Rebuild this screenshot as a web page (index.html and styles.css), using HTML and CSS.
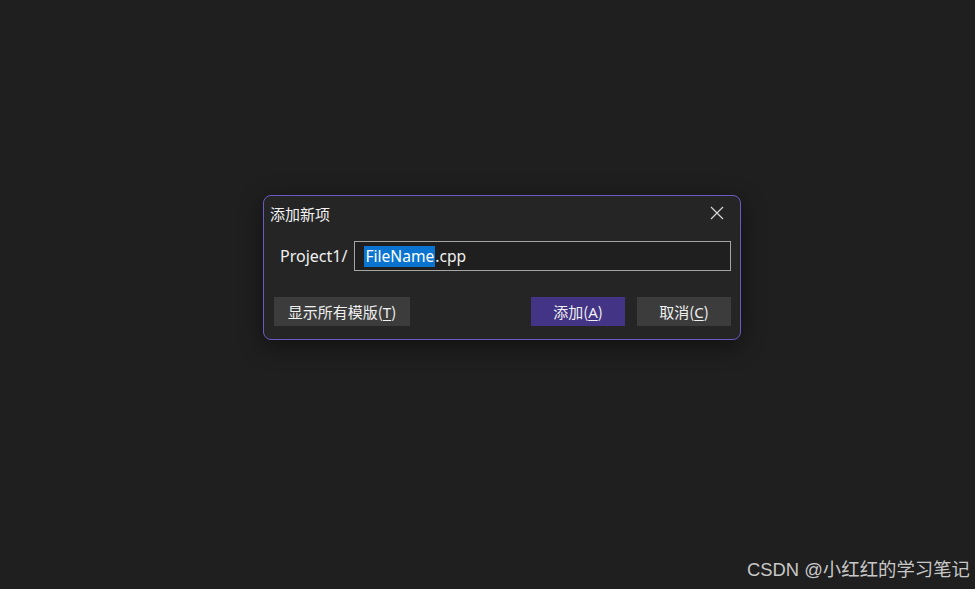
FILE: index.html
```html
<!DOCTYPE html>
<html lang="zh-CN">
<head>
  <meta charset="UTF-8">
  <title>添加新项</title>
  <link rel="stylesheet" href="styles.css">
</head>
<body>
  <div class="stage">
    <!-- Add new item dialog -->
    <div class="dialog">
      <div class="dialog-header">
        <span class="dialog-title">添加新项</span>
        <button class="close-btn" aria-label="关闭">
          <svg width="14" height="14" viewBox="0 0 14 14">
            <path d="M1 1 L13 13 M13 1 L1 13" stroke="#d6d6d6" stroke-width="1.2" fill="none"/>
          </svg>
        </button>
      </div>
      <div class="path-row">
        <span class="path-label">Project1/</span>
        <div class="name-input"><span class="selected">FileName</span>.cpp</div>
      </div>
      <div class="actions">
        <button class="btn">显示所有模版(<u>T</u>)</button>
        <div class="actions-right">
          <button class="btn btn-primary">添加(<u>A</u>)</button>
          <button class="btn btn-cancel">取消(<u>C</u>)</button>
        </div>
      </div>
    </div>
  </div>
  <div class="watermark">CSDN @小红红的学习笔记</div>
</body>
</html>
```

FILE: styles.css
```css
* {
  margin: 0;
  padding: 0;
  box-sizing: border-box;
  font-family: "Noto Sans", "Noto Sans CJK SC", sans-serif;
}

body {
  width: 975px;
  height: 589px;
  background-color: #1f1f1f;
  color: #f0f0f0;
  position: relative;
  overflow: hidden;
}

.stage {
  padding: 195px 0 0 263px;
}

/* Dialog */
.dialog {
  width: 478px;
  height: 145px;
  background-color: #252526;
  border: 1px solid #6a5bc4;
  border-radius: 8px;
  box-shadow: 0 6px 24px rgba(0, 0, 0, 0.45);
  display: flex;
  flex-direction: column;
}

.dialog-header {
  height: 36px;
  display: flex;
  align-items: center;
  justify-content: space-between;
  padding: 0 16px 2px 6px;
}

.dialog-title {
  font-size: 15px;
  color: #f2f2f2;
  font-family: "Noto Sans CJK SC", sans-serif;
}

.close-btn {
  background: none;
  border: none;
  width: 14px;
  height: 14px;
  display: flex;
  cursor: pointer;
}

.path-row {
  display: flex;
  align-items: center;
  padding: 9px 9px 0 16px;
  gap: 7px;
}

.path-label {
  font-size: 16px;
  color: #f0f0f0;
}

.name-input {
  flex: 1;
  height: 30px;
  border: 1px solid #a6a6a6;
  background-color: #1f1f1f;
  font-size: 15.6px;
  color: #f0f0f0;
  padding: 0 0 0 9px;
  display: flex;
  align-items: center;
}

.selected {
  background-color: #0a74d0;
  color: #ffffff;
  padding: 0 1px;
  line-height: 21px;
}

.actions {
  display: flex;
  justify-content: space-between;
  padding: 26px 9px 0 10px;
}

.actions-right {
  display: flex;
  gap: 12px;
}

.btn {
  height: 29px;
  border: none;
  background-color: #3c3c3c;
  color: #f0f0f0;
  font-size: 15px;
  font-family: "Noto Sans CJK SC", sans-serif;
  width: 136px;
  cursor: pointer;
}

.btn u {
  text-underline-offset: 2px;
}

.btn-primary {
  width: 94px;
  background-color: #433485;
}

.btn-cancel {
  width: 94px;
}

.watermark {
  position: absolute;
  right: 5px;
  bottom: 8px;
  font-size: 18.4px;
  color: #c8c8c8;
  font-family: "Liberation Sans", "Noto Sans CJK SC", sans-serif;
}
```
